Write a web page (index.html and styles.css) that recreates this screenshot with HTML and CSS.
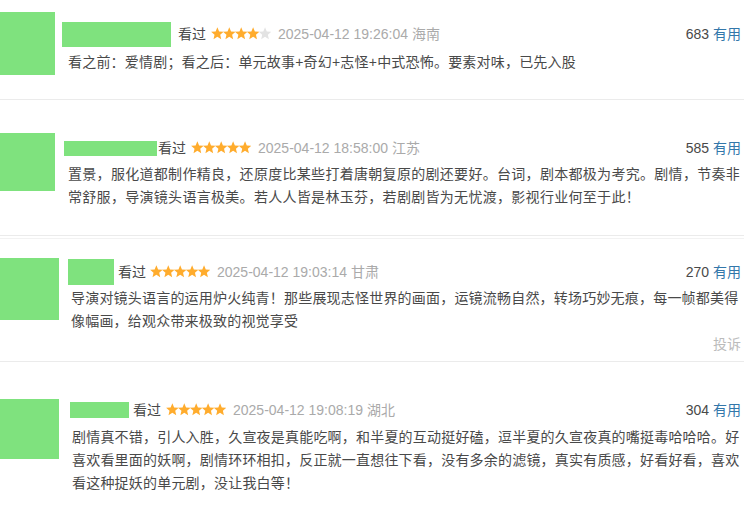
FILE: index.html
```html
<!DOCTYPE html>
<html lang="zh-CN">
<head>
<meta charset="utf-8">
<title>短评</title>
<link rel="stylesheet" href="styles.css">
</head>
<body>
<svg width="0" height="0" class="defs" aria-hidden="true">
  <defs>
    <polygon id="star" points="6,0.2 7.7,4.25 12.09,4.62 8.76,7.5 9.76,11.78 6,9.5 2.24,11.78 3.24,7.5 -0.09,4.62 4.3,4.25"/>
  </defs>
</svg>
<div class="list">
  <div class="card c1">
    <div class="avatar"></div>
    <div class="body">
      <div class="head">
        <span class="name"></span>
        <span class="watched">看过</span>
        <svg class="stars" viewBox="-0.2 0 58.4 12"><use href="#star" class="on"/><use href="#star" x="11.6" class="on"/><use href="#star" x="23.2" class="on"/><use href="#star" x="34.8" class="on"/><use href="#star" x="46.4" class="off"/></svg>
        <span class="time">2025-04-12 19:26:04 海南</span>
        <span class="votes"><span class="count">683</span> <span class="useful">有用</span></span>
      </div>
      <p class="text">看之前：爱情剧；看之后：单元故事+奇幻+志怪+中式恐怖。要素对味，已先入股</p>
    </div>
  </div>

  <div class="card c2">
    <div class="avatar"></div>
    <div class="body">
      <div class="head">
        <span class="name"></span>
        <span class="watched">看过</span>
        <svg class="stars" viewBox="-0.2 0 58.4 12"><use href="#star" class="on"/><use href="#star" x="11.6" class="on"/><use href="#star" x="23.2" class="on"/><use href="#star" x="34.8" class="on"/><use href="#star" x="46.4" class="on"/></svg>
        <span class="time">2025-04-12 18:58:00 江苏</span>
        <span class="votes"><span class="count">585</span> <span class="useful">有用</span></span>
      </div>
      <p class="text">置景，服化道都制作精良，还原度比某些打着唐朝复原的剧还要好。台词，剧本都极为考究。剧情，节奏非常舒服，导演镜头语言极美。若人人皆是林玉芬，若剧剧皆为无忧渡，影视行业何至于此！</p>
    </div>
  </div>

  <div class="card c3">
    <div class="avatar"></div>
    <div class="body">
      <div class="head">
        <span class="name"></span>
        <span class="watched">看过</span>
        <svg class="stars" viewBox="-0.2 0 58.4 12"><use href="#star" class="on"/><use href="#star" x="11.6" class="on"/><use href="#star" x="23.2" class="on"/><use href="#star" x="34.8" class="on"/><use href="#star" x="46.4" class="on"/></svg>
        <span class="time">2025-04-12 19:03:14 甘肃</span>
        <span class="votes"><span class="count">270</span> <span class="useful">有用</span></span>
      </div>
      <p class="text">导演对镜头语言的运用炉火纯青！那些展现志怪世界的画面，运镜流畅自然，转场巧妙无痕，每一帧都美得像幅画，给观众带来极致的视觉享受</p>
      <div class="report">投诉</div>
    </div>
  </div>

  <div class="card c4">
    <div class="avatar"></div>
    <div class="body">
      <div class="head">
        <span class="name"></span>
        <span class="watched">看过</span>
        <svg class="stars" viewBox="-0.2 0 58.4 12"><use href="#star" class="on"/><use href="#star" x="11.6" class="on"/><use href="#star" x="23.2" class="on"/><use href="#star" x="34.8" class="on"/><use href="#star" x="46.4" class="on"/></svg>
        <span class="time">2025-04-12 19:08:19 湖北</span>
        <span class="votes"><span class="count">304</span> <span class="useful">有用</span></span>
      </div>
      <p class="text">剧情真不错，引人入胜，久宣夜是真能吃啊，和半夏的互动挺好磕，逗半夏的久宣夜真的嘴挺毒哈哈哈。好喜欢看里面的妖啊，剧情环环相扣，反正就一直想往下看，没有多余的滤镜，真实有质感，好看好看，喜欢看这种捉妖的单元剧，没让我白等！</p>
    </div>
  </div>
</div>
</body>
</html>
```

FILE: styles.css
```css
html, body {
  margin: 0;
  padding: 0;
  background: #fff;
}

body {
  font-family: "Liberation Sans", Arial, "Noto Sans CJK SC", sans-serif;
  font-size: 14px;
  color: #494949;
  overflow: hidden;
}

.defs {
  display: block;
  width: 0;
  height: 0;
}

.list {
  width: 744px;
}

.card {
  display: flex;
  align-items: flex-start;
  border-bottom: 1px solid #ebebeb;
  box-sizing: content-box;
}

.avatar {
  flex: none;
  background: #7fe27e;
}

.body {
  flex: 1;
  min-width: 0;
}

.head {
  display: flex;
  align-items: center;
  height: 26px;
  line-height: 26px;
  white-space: nowrap;
  padding-right: 3px;
}

.name {
  flex: none;
  background: #7fe27e;
}

.watched {
  color: #494949;
}

.stars {
  flex: none;
  width: 60px;
  height: 12.5px;
  margin-left: 5px;
  margin-top: -1px;
}

.stars .on {
  fill: #ffac2d;
}

.stars .off {
  fill: #e3e3e3;
}

.time {
  margin-left: 7px;
  color: #aaa;
}

.votes {
  margin-left: auto;
  color: #494949;
}

.useful {
  color: #3377aa;
}

.text {
  margin: 0;
  line-height: 23px;
  letter-spacing: 0.2px;
  color: #494949;
}

.report {
  text-align: right;
  line-height: 23px;
  padding-right: 3px;
  color: #bbb;
}

/* card 1 */
.c1 {
  height: 99px;
}
.c1 .avatar {
  width: 55px;
  height: 63px;
  margin-top: 12px;
}
.c1 .body {
  margin-left: 7px;
  padding-top: 21px;
}
.c1 .name {
  width: 109px;
  height: 25px;
}
.c1 .watched {
  margin-left: 7px;
}
.c1 .text {
  margin-top: 3.5px;
  padding-left: 6px;
}

/* card 2 */
.c2 {
  height: 135px;
}
.c2 .avatar {
  width: 55px;
  height: 58px;
  margin-top: 33px;
}
.c2 .body {
  margin-left: 9px;
  padding-top: 35px;
}
.c2 .name {
  width: 93px;
  height: 15px;
}
.c2 .watched {
  margin-left: 1px;
}
.c2 .text {
  margin-top: 1.5px;
  padding-left: 4px;
  letter-spacing: 0.3px;
}

/* card 3 */
.c3 {
  height: 122px;
  margin-top: 2px;
  border-top: 1px solid #f2f2f2;
}
.c3 .avatar {
  width: 59px;
  height: 62px;
  margin-top: 19px;
}
.c3 .body {
  margin-left: 9px;
  padding-top: 20px;
}
.c3 .name {
  width: 46px;
  height: 26px;
}
.c3 .watched {
  margin-left: 4px;
}
.c3 .stars {
  margin-left: 4px;
}
.c3 .text {
  margin-top: 1.5px;
  padding-left: 3px;
}

/* card 4 */
.c4 {
  border-bottom: none;
}
.c4 .avatar {
  width: 59px;
  height: 60px;
  margin-top: 37px;
}
.c4 .body {
  margin-left: 11px;
  padding-top: 35px;
}
.c4 .name {
  width: 59px;
  height: 16px;
}
.c4 .watched {
  margin-left: 4px;
}
.c4 .text {
  margin-top: 2.5px;
  padding-left: 2px;
}
```
